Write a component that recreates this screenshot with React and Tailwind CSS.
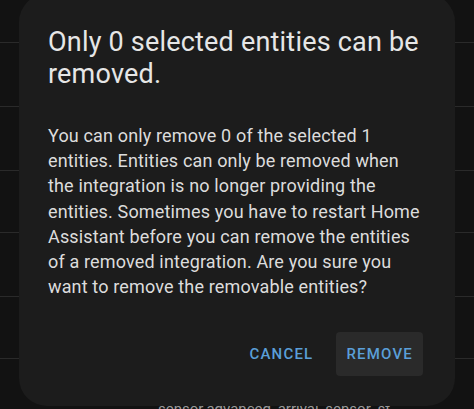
import React from 'react';

const rowHeights = [43, 64, 64, 62, 64, 62, 60];

const RemoveEntitiesDialog = () => {
  return (
    <div
      className="absolute left-[19px] top-[-6px] w-[436px] h-[412px] rounded-[28px] bg-[#1c1c1c] flex flex-col pl-[29px] pr-[30px] pt-[32px] pb-[30px]"
      role="dialog"
    >
      <h2 className="text-[27px] leading-[32px] font-normal text-[#e6e6e6] tracking-[0.2px]">
        Only 0 selected entities can be removed.
      </h2>
      <p className="mt-[33px] text-[18px] leading-[25.2px] text-[#dcdcdc] tracking-[0.15px]">
        You can only remove 0 of the selected 1 entities. Entities can only be removed when the
        integration is no longer providing the entities. Sometimes you have to restart Home
        Assistant before you can remove the entities of a removed integration. Are you sure you
        want to remove the removable entities?
      </p>
      <div className="mt-auto flex justify-end items-center gap-[13px] pr-[2px]">
        <button className="h-[44px] px-[10px] rounded-[4px] text-[15px] font-medium tracking-[1.2px] text-[#5a9fd8]">
          CANCEL
        </button>
        <button className="h-[44px] px-[10px] rounded-[4px] bg-[#2a2a2a] text-[15px] font-medium tracking-[1.2px] text-[#5a9fd8]">
          REMOVE
        </button>
      </div>
    </div>
  );
};

const App = () => {
  return (
    <div
      className="relative w-[474px] h-[409px] overflow-hidden bg-[#121212]"
      style={{ fontFamily: 'Roboto, "Noto Sans", sans-serif' }}
    >
      <div className="flex flex-col">
        {rowHeights.map((h, i) => (
          <div
            key={i}
            className="border-b border-[#2a2a2a] shrink-0"
            style={{ height: h }}
          />
        ))}
      </div>
      <div className="absolute left-[158px] top-[398px] text-[15px] text-[#9a9a9a] whitespace-nowrap">
        sensor.advanced_arrival_sensor_st
      </div>
      <RemoveEntitiesDialog />
    </div>
  );
};

export default App;
